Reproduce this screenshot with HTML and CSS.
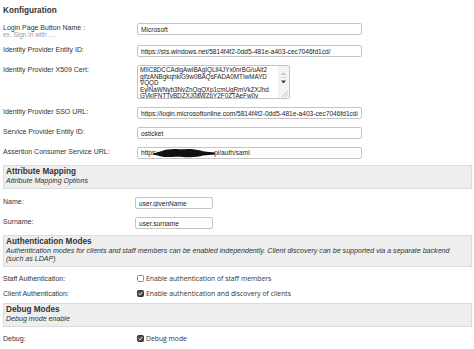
FILE: index.html
```html
<!DOCTYPE html>
<html lang="de">
<head>
<meta charset="utf-8">
<title>Konfiguration</title>
<link rel="stylesheet" href="styles.css">
</head>
<body>
<div class="page">
  <h2 class="title">Konfiguration</h2>

  <div class="row">
    <div class="label tall">
      <div>Login Page Button Name :</div>
      <div class="hint">ex. Sign in with ....</div>
    </div>
    <input class="field wide" value="Microsoft">
  </div>

  <div class="row">
    <div class="label">Identity Provider Entity ID:</div>
    <input class="field wide" value="https://sts.windows.net/5814f4f2-0dd5-481e-a403-cec7046fd1cd/">
  </div>

  <div class="row">
    <div class="label">Identity Provider X509 Cert:</div>
    <div class="cert">
      <div class="cert-text">MIIC8DCCAdigAwIBAgIQLlI4JYx0nrBG/uAlt2<br>gifzANBgkqhkiG9w0BAQsFADA0MTIwMAYD<br>VQQD<br>EylNaWNyb3NvZnQgQXp1cmUgRmVkZXJhd<br>GVkIFNTTyBDZXJ0aWZpY2F0ZTAeFw0y</div>
      <svg class="cert-bar" width="11" height="32" viewBox="0 0 11 32">
        <rect x="0" y="0" width="11" height="32" fill="#f3f3f3"/>
        <path d="M3.5 9 L5.5 7 L7.5 9" stroke="#9a9a9a" stroke-width="1" fill="none"/>
        <path d="M2.5 11.5 H8.5" stroke="#dadada" stroke-width="1"/>
        <path d="M3 14.5 H8 L5.5 17.5 Z" fill="#3d3d3d"/>
        <path d="M10 25 L4 31 M10 28 L7 31" stroke="#b5b5b5" stroke-width="0.8"/>
      </svg>
    </div>
  </div>

  <div class="row">
    <div class="label">Identity Provider SSO URL:</div>
    <input class="field wide" value="https://login.microsoftonline.com/5814f4f2-0dd5-481e-a403-cec7046fd1cd/saml2">
  </div>

  <div class="row">
    <div class="label">Service Provider Entity ID:</div>
    <input class="field wide" value="osticket">
  </div>

  <div class="row">
    <div class="label">Assertion Consumer Service URL:</div>
    <div class="field wide">https:<svg class="redact" width="62" height="10" viewBox="0 0 62 10"><path d="M0 5.5 C3 4.5 6 3.8 9 3 C13 1.5 19 0.8 25 1.2 C29 1.6 33 0.6 38 1 C43 1.4 47 2.4 50 3.2 C55 3.8 59 4 62 4.4 L62 6.6 C58 7 54 7.2 50 7.6 C46 8.6 42 9.4 36 9.3 C30 9.2 26 8.4 20 8.9 C15 9.3 10 9 7 8.2 C4 7.4 2 7 0 6.6 Z" fill="#111"/></svg>pi/auth/saml</div>
  </div>

  <div class="section">
    <h3>Attribute Mapping</h3>
    <p>Attribute Mapping Options</p>
  </div>

  <div class="row">
    <div class="label narrow">Name:</div>
    <input class="field short" value="user.givenName">
  </div>

  <div class="row">
    <div class="label narrow">Surname:</div>
    <input class="field short" value="user.surname">
  </div>

  <div class="section">
    <h3>Authentication Modes</h3>
    <p>Authentication modes for clients and staff members can be enabled independently. Client discovery can be supported via a separate backend<br>(such as LDAP)</p>
  </div>

  <div class="row check">
    <div class="label">Staff Authentication:</div>
    <div class="opt">
      <svg class="box" width="7" height="7" viewBox="0 0 7 7"><rect x="0.5" y="0.5" width="6" height="6" rx="1" fill="#fff" stroke="#8a8a8a"/></svg>
      <span>Enable authentication of staff members</span>
    </div>
  </div>

  <div class="row check">
    <div class="label">Client Authentication:</div>
    <div class="opt">
      <svg class="box" width="7" height="7" viewBox="0 0 7 7"><rect x="0.5" y="0.5" width="6" height="6" rx="1" fill="#4a4a4a" stroke="#333"/><path d="M1.6 3.5 L2.9 4.8 L5.4 2.1" stroke="#fff" stroke-width="1" fill="none"/></svg>
      <span>Enable authentication and discovery of clients</span>
    </div>
  </div>

  <div class="section">
    <h3>Debug Modes</h3>
    <p>Debug mode enable</p>
  </div>

  <div class="row check">
    <div class="label">Debug:</div>
    <div class="opt">
      <svg class="box" width="7" height="7" viewBox="0 0 7 7"><rect x="0.5" y="0.5" width="6" height="6" rx="1" fill="#4a4a4a" stroke="#333"/><path d="M1.6 3.5 L2.9 4.8 L5.4 2.1" stroke="#fff" stroke-width="1" fill="none"/></svg>
      <span>Debug mode</span>
    </div>
  </div>
</div>
</body>
</html>
```

FILE: styles.css
```css
* { box-sizing: border-box; }

html, body {
  margin: 0;
  padding: 0;
  background: #fff;
}

body {
  width: 474px;
  height: 349px;
  overflow: hidden;
  font-family: "Liberation Sans", Arial, sans-serif;
  font-size: 7px;
  color: #333;
}

.page {
  padding: 4px 2px 0 3px;
}

.title {
  margin: 0 0 2px;
  font-size: 8.2px;
  font-weight: bold;
  line-height: 13px;
  color: #333;
}

.row {
  display: flex;
  align-items: flex-start;
  padding: 4px 0;
}

.label {
  width: 134px;
  flex: none;
  line-height: 10px;
}

.label.narrow {
  width: 132px;
}

.label.tall {
  padding-top: 1px;
  line-height: 8px;
}

.hint {
  font-size: 6.5px;
  line-height: 5px;
  color: #9a9a9a;
}

.field {
  display: block;
  height: 12px;
  margin: 0;
  padding: 0 3px;
  border: 1px solid #c4c4c4;
  border-radius: 2px;
  background: #fff;
  font-family: "Liberation Sans", Arial, sans-serif;
  font-size: 6.6px;
  line-height: 10px;
  color: #222;
  outline: none;
  white-space: nowrap;
  overflow: hidden;
}

.wide { width: 225px; }
.short { width: 78px; }

.redact {
  display: inline-block;
  vertical-align: top;
  margin: 0 -1px 0 -4px;
}

.cert {
  display: flex;
  width: 153px;
  height: 34px;
  border: 1px solid #c4c4c4;
  border-radius: 2px;
  overflow: hidden;
  background: #fff;
}

.cert-text {
  flex: 1;
  min-width: 0;
  padding: 1px 2px;
  font-size: 6.3px;
  line-height: 6.6px;
  color: #222;
  white-space: nowrap;
  overflow: hidden;
}

.cert-bar {
  flex: none;
  display: block;
}

.section {
  margin: 2px 0 4px;
  padding: 1px 2px 3px;
  background: #eee;
  border: 1px solid #dcdcdc;
}

.section h3 {
  margin: 0;
  font-size: 8.2px;
  line-height: 10px;
  font-weight: bold;
  color: #333;
}

.section p {
  margin: 0;
  font-size: 7.1px;
  line-height: 8px;
  font-style: italic;
  color: #333;
}

.row.check {
  padding: 3px 0;
}

.row.check .label {
  line-height: 9px;
}

.opt {
  display: flex;
  align-items: center;
  gap: 2px;
  font-family: "Open Sans", "Liberation Sans", sans-serif;
  font-size: 6.8px;
  line-height: 9px;
  color: #333;
}

.box {
  display: block;
  flex: none;
}
```
